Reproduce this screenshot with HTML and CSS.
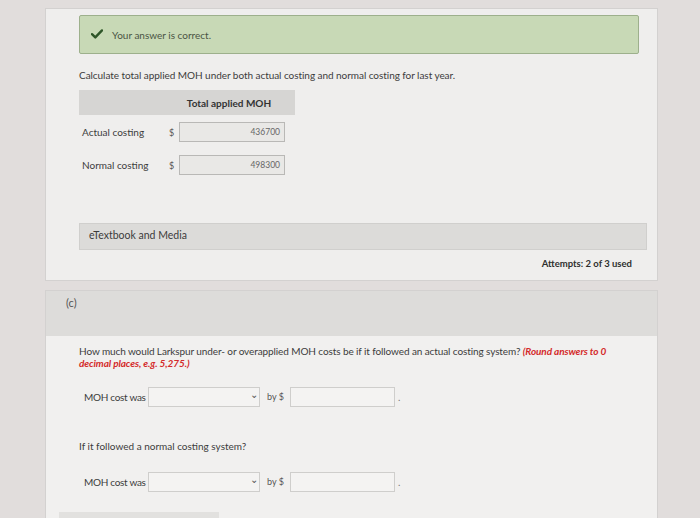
FILE: index.html
```html
<!DOCTYPE html>
<html>
<head>
<meta charset="utf-8">
<link rel="stylesheet" href="styles.css">
</head>
<body>
<div class="page">
  <div class="card card-top">
    <div class="banner">
      <svg class="check" width="12" height="10" viewBox="0 0 12 10"><path d="M1 5.2 L4.3 8.4 L11 1.4" fill="none" stroke="#2e5628" stroke-width="2.4" stroke-linecap="round" stroke-linejoin="round"/></svg>
      <span>Your answer is correct.</span>
    </div>
    <p class="prompt">Calculate total applied MOH under both actual costing and normal costing for last year.</p>
    <div class="table">
      <div class="thead">
        <span class="th-blank"></span>
        <span class="th">Total applied MOH</span>
      </div>
      <div class="trow">
        <span class="tlabel">Actual costing</span>
        <span class="dollar">$</span>
        <span class="field">436700</span>
      </div>
      <div class="trow">
        <span class="tlabel">Normal costing</span>
        <span class="dollar">$</span>
        <span class="field">498300</span>
      </div>
    </div>
    <div class="media">eTextbook and Media</div>
    <div class="attempts">Attempts: 2 of 3 used</div>
  </div>

  <div class="card card-c">
    <div class="c-head">(c)</div>
    <div class="c-body">
      <p class="question">How much would Larkspur under- or overapplied MOH costs be if it followed an actual costing system? <em class="hint">(Round answers to 0</em><br><em class="hint">decimal places, e.g. 5,275.)</em></p>
      <div class="answer">
        <span class="alabel">MOH cost was</span>
        <span class="select"><span class="chev">&#8964;</span></span>
        <span class="by">by $</span>
        <span class="blank"></span>
        <span class="dot">.</span>
      </div>
      <p class="sub">If it followed a normal costing system?</p>
      <div class="answer">
        <span class="alabel">MOH cost was</span>
        <span class="select"><span class="chev">&#8964;</span></span>
        <span class="by">by $</span>
        <span class="blank"></span>
        <span class="dot">.</span>
      </div>
      <div class="btnstub"></div>
    </div>
  </div>
</div>
</body>
</html>
```
FILE: styles.css
```css
* { box-sizing: border-box; }
html, body { margin: 0; padding: 0; }
body {
  background: #e1dddc;
  font-family: Lato, "Open Sans", sans-serif;
  color: #3c3c3c;
  font-size: 10px;
  width: 700px;
  height: 518px;
  overflow: hidden;
}
.page {
  padding: 8px 42px 0 45px;
}
.card {
  background: #efeeed;
  border: 1px solid #d3d1d0;
}
.card-top {
  padding: 6px 18px 0 33px;
  height: 273px;
}
.banner {
  display: flex;
  align-items: center;
  height: 39px;
  background: #c8d9b6;
  border: 1px solid #9db08c;
  border-radius: 2px;
  padding-left: 11px;
  color: #4a5444;
  font-size: 10px;
}
.check { margin-right: 9px; margin-top: -2px; }
.prompt {
  margin: 15px 0 0 0;
  line-height: 12px;
  letter-spacing: -0.05px;
}
.table {
  width: 216px;
  margin-top: 9px;
}
.thead {
  display: flex;
  height: 25px;
  background: #d6d5d3;
  align-items: center;
}
.th-blank { width: 84px; }
.th {
  width: 132px;
  text-align: center;
  font-weight: 700;
  color: #333;
}
.trow {
  display: flex;
  align-items: center;
  margin-top: 7px;
  height: 20px;
}
.trow + .trow { margin-top: 13px; }
.tlabel { width: 90px; padding-left: 3px; }
.dollar { width: 10px; font-size: 9px; color: #555; }
.field {
  width: 106px;
  height: 20px;
  border: 1px solid #b9b8b6;
  background: #e9e8e6;
  text-align: right;
  padding-right: 4px;
  line-height: 18px;
  font-size: 8.5px;
  color: #666;
}
.media {
  margin-top: 48px;
  margin-right: -8px;
  height: 27px;
  background: #dcdbd9;
  border: 1px solid #d0cfcd;
  padding: 5px 0 0 9px;
  font-size: 10.5px;
}
.attempts {
  text-align: right;
  margin-top: 8px;
  margin-right: 7px;
  font-weight: 700;
  font-size: 9.5px;
  color: #2e2e2e;
}
.card-c {
  margin-top: 9px;
  height: 240px;
  background: #f1f0ef;
}
.c-head {
  height: 45px;
  background: #dddcda;
  padding: 5px 0 0 20px;
  font-size: 11px;
  color: #555;
}
.c-body {
  padding: 9px 20px 0 33px;
}
.question {
  margin: 0;
  line-height: 12px;
  letter-spacing: -0.1px;
  width: 560px;
}
.hint {
  color: #d42a2a;
  font-weight: 700;
}
.answer {
  display: flex;
  align-items: center;
  margin-top: 17px;
  height: 21px;
}
.alabel { width: 69px; padding-left: 5px; letter-spacing: -0.3px; }
.select {
  width: 112px;
  height: 20px;
  border: 1px solid #cfcecc;
  background: #f4f3f2;
  position: relative;
}
.chev {
  position: absolute;
  right: 1px;
  top: 1px;
  font-size: 10px;
  line-height: 10px;
  color: #555;
}
.by { margin: 0 6px 0 7px; font-size: 9px; color: #555; }
.blank {
  width: 105px;
  height: 20px;
  border: 1px solid #cfcecc;
  background: #f4f3f2;
}
.dot { margin-left: 3px; color: #777; }
.sub {
  margin: 33px 0 0 0;
  line-height: 12px;
}
.answer + .sub + .answer { margin-top: 19px; }
.btnstub {
  margin-top: 20px;
  margin-left: -20px;
  width: 160px;
  height: 8px;
  background: #e2e1df;
}
```
